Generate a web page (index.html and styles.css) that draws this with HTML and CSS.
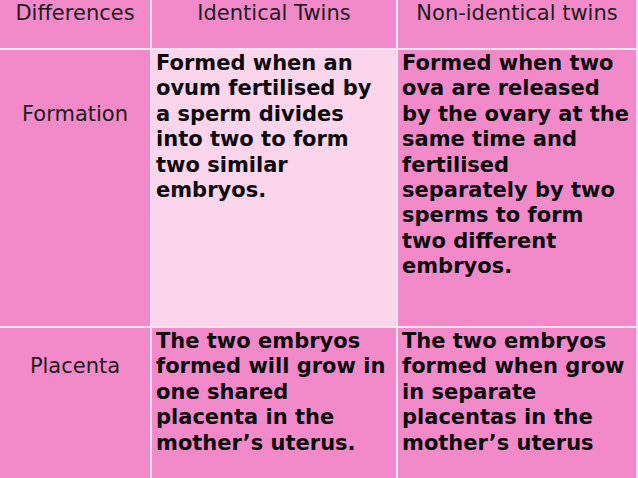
FILE: index.html
```html
<!DOCTYPE html>
<html>
<head>
<meta charset="utf-8">
<link rel="stylesheet" href="styles.css">
</head>
<body>
<div class="table">
  <div class="cell head">Differences</div>
  <div class="cell head">Identical Twins</div>
  <div class="cell head">Non-identical twins</div>

  <div class="cell label label-formation">Formation</div>
  <div class="cell body light">Formed when an ovum fertilised by a sperm divides into two to form two similar embryos.</div>
  <div class="cell body">Formed when two ova are released by the ovary at the same time and fertilised separately by two sperms to form two different embryos.</div>

  <div class="cell label label-placenta">Placenta</div>
  <div class="cell body">The two embryos formed will grow in one shared placenta in the mother’s uterus.</div>
  <div class="cell body">The two embryos formed when grow in separate placentas in the mother’s uterus</div>
</div>
</body>
</html>
```
FILE: styles.css
```css
html, body {
  margin: 0;
  padding: 0;
}
body {
  width: 638px;
  height: 478px;
  overflow: hidden;
  background: #fbe3f1;
  font-family: "DejaVu Sans", Verdana, sans-serif;
}
.table {
  display: grid;
  grid-template-columns: 150px 244px 238px;
  grid-template-rows: 48px 276px 150px;
  column-gap: 2px;
  row-gap: 2px;
  width: 636px;
  height: 478px;
  background: #fbe3f1;
}
.cell {
  background: #f28ac9;
  color: #111;
  font-size: 21px;
  line-height: 25.4px;
  box-sizing: border-box;
}
.head {
  text-align: center;
  padding-top: 1px;
  color: #1e1a1e;
}
.label {
  text-align: center;
  color: #1e1a1e;
}
.label-formation {
  padding-top: 52px;
}
.label-placenta {
  padding-top: 26px;
}
.body {
  font-weight: bold;
  padding: 1px 4px 0 4px;
  color: #0c0a0c;
}
.light {
  background: #fbd5ec;
}
```
